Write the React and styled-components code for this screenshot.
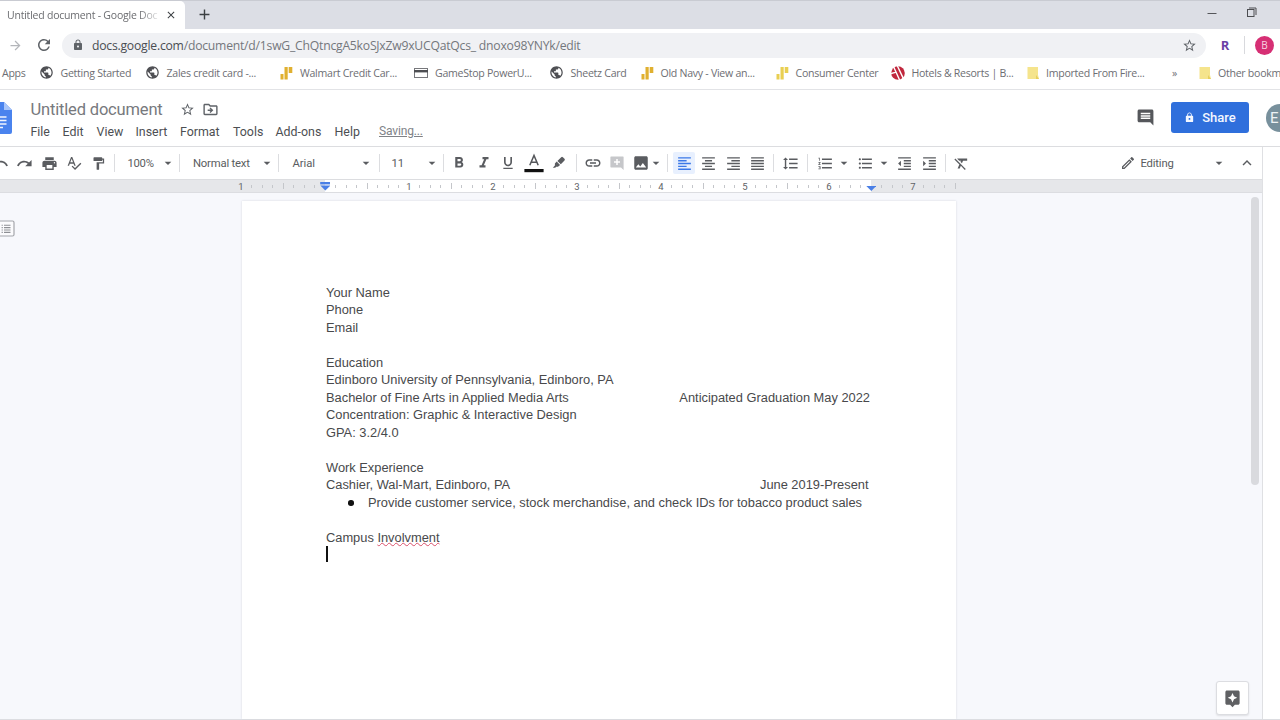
import React from 'react';
import styled, { createGlobalStyle, css } from 'styled-components';
import {
  MdUndo, MdRedo, MdPrint, MdSpellcheck, MdFormatPaint, MdArrowDropDown,
  MdFormatBold, MdFormatItalic, MdFormatUnderlined, MdLink, MdImage,
  MdFormatAlignLeft, MdFormatAlignCenter, MdFormatAlignRight, MdFormatAlignJustify,
  MdFormatLineSpacing, MdFormatListNumbered, MdFormatListBulleted,
  MdFormatIndentDecrease, MdFormatIndentIncrease, MdFormatClear,
  MdOutlineEdit, MdKeyboardArrowUp, MdStarBorder, MdComment, MdLock, MdPublic,
  MdRefresh, MdArrowForward, MdClose, MdAdd, MdAssistant, MdOutlineDriveFileMove,
} from 'react-icons/md';

const GlobalStyle = createGlobalStyle`
  * {
    box-sizing: border-box;
  }

  body {
    margin: 0;
    overflow: hidden;
    background: #fff;
  }

  svg {
    display: block;
    flex-shrink: 0;
  }
`;

const Window = styled.div`
  width: 1280px;
  height: 720px;
  display: flex;
  flex-direction: column;
  overflow: hidden;
  font-family: Roboto, 'Liberation Sans', sans-serif;
  color: #5f6368;
`;

/* Text whose tracking varies from place to place */
const Label = styled.span`
  white-space: nowrap;
  letter-spacing: ${({ $track }) => $track || 0}px;
`;

/* ---------- browser ---------- */

const TabStrip = styled.div`
  height: 29px;
  display: flex;
  align-items: stretch;
  background: #dcdee5;
  border-top: 1px solid #c9cbd2;
  font-family: 'Open Sans', 'Noto Sans', sans-serif;
`;

const Tab = styled.div`
  width: 185px;
  display: flex;
  align-items: center;
  padding: 0 8px 1px 7px;
  background: #fff;
  border-radius: 0 5px 0 0;
  font-size: 10.5px;
  color: #6b6c70;
`;

const TabTitle = styled.div`
  width: 152px;
  margin-right: 6px;
  overflow: hidden;
  white-space: nowrap;
  letter-spacing: -0.22px;
  mask-image: linear-gradient(to right, #000 132px, transparent 155px);
`;

const NewTab = styled.div`
  display: flex;
  align-items: center;
  padding: 0 0 1px 11px;
  color: #3c4043;
`;

const WindowButtons = styled.div`
  display: flex;
  align-items: center;
  gap: 29px;
  margin-left: auto;
  padding: 0 23px 5px 0;
`;

const AddressRow = styled.div`
  height: 32px;
  display: flex;
  align-items: center;
  color: #5f6368;
  font-family: 'Open Sans', 'Noto Sans', sans-serif;
`;

const NavButton = styled.div`
  width: ${({ $width }) => $width}px;
  display: flex;
  justify-content: center;
  color: ${({ $faded }) => ($faded ? '#b4b6ba' : '#5f6368')};
`;

const UrlBar = styled.div`
  width: 1144px;
  height: 25px;
  display: flex;
  align-items: center;
  padding: 0 9px 0 10px;
  border-radius: 13px;
  background: #f0f1f4;
`;

const Url = styled.div`
  flex: 1;
  margin-left: 8px;
  font-size: 12.2px;
  white-space: nowrap;
  letter-spacing: ${({ $track }) => $track}px;
  color: #74777c;

  b {
    font-weight: 400;
    color: #4a4d52;
  }
`;

const Extension = styled.div`
  width: 39px;
  display: flex;
  justify-content: center;
  color: #6a3fa5;
  font: 700 13px 'Open Sans', sans-serif;
  border-right: 1px solid #d8d9dd;
`;

const Profile = styled.div`
  width: 19px;
  height: 19px;
  margin-left: 10px;
  border-radius: 50%;
  display: flex;
  align-items: center;
  justify-content: center;
  flex-shrink: 0;
  background: #d62f74;
  color: #f7d3e2;
  font-size: 10px;
`;

const Bookmarks = styled.div`
  height: 29px;
  display: flex;
  align-items: center;
  padding: 0 0 5px;
  border-bottom: 1px solid #e2e3e6;
  font-family: 'Open Sans', 'Noto Sans', sans-serif;
  font-size: 10.6px;
  color: #6d6e73;
`;

const Bookmark = styled.div`
  width: ${({ $width }) => $width}px;
  flex-shrink: 0;
  display: flex;
  align-items: center;
  gap: 7px;
  padding-left: ${({ $pad }) => $pad || 0}px;
`;

/* ---------- docs header ---------- */

const DocsHeader = styled.header`
  height: 57px;
  display: flex;
  align-items: flex-start;
  border-bottom: 1px solid #dcdde0;
`;

const LogoBox = styled.div`
  width: 30.5px;
  padding-top: 12px;

  svg {
    margin-left: -12px;
  }
`;

const TitleColumn = styled.div`
  flex: 1;
  padding-top: 9px;
`;

const TitleRow = styled.div`
  height: 20px;
  display: flex;
  align-items: center;
`;

const Title = styled.h1`
  width: 149px;
  margin: 0;
  font-size: 16.5px;
  font-weight: 400;
  letter-spacing: ${({ $track }) => $track}px;
  white-space: nowrap;
  color: #77797d;
`;

const TitleIcon = styled.div`
  width: 22.5px;
`;

const Menu = styled.nav`
  height: 24px;
  display: flex;
  align-items: center;
  font-size: 12.4px;
  color: #4d4f53;
`;

const MenuItem = styled.div`
  width: ${({ $width }) => $width}px;
  white-space: nowrap;
`;

const SaveState = styled.div`
  font-size: 12px;
  letter-spacing: -0.15px;
  color: #808287;
  text-decoration: underline;
`;

const HeaderActions = styled.div`
  display: flex;
  align-items: center;
  padding-top: 12px;
  color: #55575b;
`;

const ShareButton = styled.button`
  width: 78px;
  height: 31px;
  margin: 0 17px 0 16px;
  padding: 0;
  display: flex;
  align-items: center;
  justify-content: center;
  gap: 7px;
  border: none;
  border-radius: 3px;
  background: #2f6fdc;
  color: #f3f7ff;
  font: 500 13px Roboto, sans-serif;
`;

const Account = styled.div`
  width: 14px;
  height: 28px;
  padding-left: 4px;
  overflow: hidden;
  border-radius: 14px 0 0 14px;
  background: #78909c;
  color: #eef2f4;
  font-size: 15px;
  line-height: 28px;
`;

/* ---------- toolbar ---------- */

const Main = styled.div`
  flex: 1;
  display: flex;
  min-height: 0;
  border-bottom: 1px solid #dcdde1;
`;

const Editor = styled.div`
  width: 1263px;
  display: flex;
  flex-direction: column;
  border-right: 1px solid #dfe0e3;
`;

const Toolbar = styled.div`
  height: 33px;
  display: flex;
  align-items: center;
  border-bottom: 1px solid #dcdde0;
  font-size: 11.3px;
  color: #5a5c60;
`;

const Slot = styled.div`
  width: ${({ $width }) => $width}px;
  height: 22px;
  flex-shrink: 0;
  display: flex;
  align-items: center;
  justify-content: center;
  margin-left: ${({ $shift }) => $shift || 0}px;

  ${({ $active }) => $active && css`
    background: #e8f0fe;
    color: #3b78e7;
    border-radius: 2px;
  `}
`;

const Divider = styled.div`
  width: ${({ $width }) => $width}px;
  flex-shrink: 0;
  display: flex;
  justify-content: center;

  &::after {
    content: '';
    width: 1px;
    height: 18px;
    background: #dcdde0;
  }
`;

const Field = styled.div`
  width: ${({ $width }) => $width}px;
  padding-left: ${({ $pad }) => $pad}px;
  flex-shrink: 0;
  white-space: nowrap;
  letter-spacing: ${({ $track }) => $track || 0}px;
`;

const ModeGroup = styled.div`
  display: flex;
  align-items: center;
  margin-left: auto;
`;

/* ---------- ruler ---------- */

const Ruler = styled.div`
  height: 13px;
  display: flex;
  padding-left: 235.75px;
  background: linear-gradient(to right, #e6e7ea 325px, #fff 325px, #fff 871px, #e6e7ea 871px);
  border-bottom: 1px solid #dcdde1;
`;

const Tick = styled.div`
  width: 10.5px;
  flex-shrink: 0;
  display: flex;
  align-items: center;
  justify-content: center;
  font-size: 9.5px;
  color: #606266;

  &::after {
    content: '';
    width: ${({ $size }) => ($size ? 1 : 0)}px;
    height: ${({ $size }) => $size}px;
    background: #c4c6ca;
  }
`;

/* ---------- page ---------- */

const Canvas = styled.div`
  flex: 1;
  min-height: 0;
  display: flex;
  background: #f7f8fc;
`;

const Gutter = styled.div`
  width: 242px;
  padding-top: 26.5px;
`;

const Page = styled.article`
  width: 714px;
  margin-top: 8px;
  padding: 82.6px 86px 0 84px;
  background: #fff;
  box-shadow: 0 0 2px #d5d7de;
  font-family: 'Liberation Sans', Arial, sans-serif;
  font-size: 12.85px;
  color: #48494b;
`;

const Line = styled.div`
  height: 17.5px;
  display: flex;
  justify-content: space-between;
  padding-right: ${({ $right }) => $right || 0}px;
  line-height: 17.5px;
  white-space: pre;
`;

const BulletLine = styled(Line)`
  justify-content: flex-start;
  align-items: center;
  gap: 14.5px;
  padding-left: 22px;
`;

const Dot = styled.span`
  width: 5.5px;
  height: 5.5px;
  margin-top: 1px;
  border-radius: 50%;
  background: #111;
`;

const Misspelled = styled.span`
  text-decoration: underline wavy #d9506a 1px;
  text-underline-offset: 0;
  text-decoration-skip-ink: none;
`;

const Caret = styled.span`
  width: 2px;
  height: 16px;
  background: #111;
`;

const RightSide = styled.div`
  flex: 1;
  display: flex;
  justify-content: flex-end;
  padding-top: 4px;
`;

const Explore = styled.button`
  width: 33px;
  height: 34px;
  margin: auto 2px 4px 0;
  padding: 0;
  display: flex;
  align-items: center;
  justify-content: center;
  border: 1px solid #dcdde1;
  border-radius: 3px;
  background: #fff;
  color: #5f6063;
  box-shadow: 0 1px 2px rgba(0, 0, 0, 0.1);
`;

const ScrollThumb = styled.div`
  width: 8px;
  height: 288px;
  margin-right: 3px;
  border-radius: 4px;
  background: #d9dade;
`;

const BarsIcon = ({ color = '#e0b030' }) => (
  <svg width="13" height="14" viewBox="0 0 13 14" fill={color}>
    <rect x="0.5" y="8" width="3" height="5.5" />
    <rect x="4.5" y="1" width="3.2" height="12.5" />
    <rect x="8.7" y="1" width="3.6" height="6" />
  </svg>
);

const CardIcon = () => (
  <svg width="14" height="12" viewBox="0 0 14 12">
    <rect x="0.5" y="1.5" width="13" height="9" fill="#fff" stroke="#77787c" />
    <rect x="0" y="3" width="14" height="2.4" fill="#4d4e52" />
  </svg>
);

const HotelIcon = () => (
  <svg width="14" height="14" viewBox="0 0 14 14">
    <circle cx="7" cy="7" r="6.8" fill="#c0273d" />
    <path d="M2.6 0.8 L8.6 14 M6.4 0 L12.4 12.6 M0 7.6 L4.4 6.4" stroke="#fff" strokeWidth="1.4" />
  </svg>
);

const FolderIcon = () => (
  <svg width="12" height="14" viewBox="0 0 12 14">
    <path d="M0.5 1 H11 V9 L12 13 H0.5 Z" fill="#f5e48c" />
    <path d="M9 9 L12 13 H9 Z" fill="#e8cf5c" />
  </svg>
);

const DocsLogo = () => (
  <svg width="24" height="32" viewBox="0 0 24 32">
    <path d="M2 0 H16 L24 8 V30 Q24 32 22 32 H2 Q0 32 0 30 V2 Q0 0 2 0 Z" fill="#4a83ee" />
    <path d="M16 0 L24 8 H16 Z" fill="#a9c6fa" />
    <path d="M6 15 H18.5 M6 18.5 H18.5 M6 22 H18.5 M6 25.5 H15" stroke="#f1f5fe" strokeWidth="1.7" />
  </svg>
);

const TextColorIcon = () => (
  <svg width="20" height="20" viewBox="0 0 20 20">
    <path d="M5.8 12.2 L10 2.4 L14.2 12.2 M7.2 9.2 H12.8" fill="none" stroke="#55575b" strokeWidth="1.5" />
    <rect x="0.4" y="16" width="19.2" height="3.2" fill="#111" />
  </svg>
);

const MarkerIcon = () => (
  <svg width="14" height="14" viewBox="0 0 14 14" fill="#5a5c60">
    <path d="M9.2 1.2 Q10 0.4 10.9 1.2 L12.5 2.8 Q13.3 3.6 12.5 4.5 L8.8 8.3 L5.4 4.9 Z" />
    <path d="M4.7 5.6 L8.1 9 L6 10.7 H4.2 L3.2 11.8 H0.8 L2.9 9.5 V7.6 Z" />
  </svg>
);

const AddCommentIcon = () => (
  <svg width="14" height="14" viewBox="0 0 14 14">
    <path d="M1 0.5 H13 Q13.6 0.5 13.6 1.1 V14 L11 11.4 H1 Q0.4 11.4 0.4 10.8 V1.1 Q0.4 0.5 1 0.5 Z" fill="#c6c7ca" />
    <path d="M7 3 V9 M4 6 H10" stroke="#fff" strokeWidth="1.5" />
  </svg>
);

const OutlineIcon = () => (
  <svg width="15" height="17" viewBox="0 0 15 17">
    <rect x="-3" y="1" width="17" height="15" rx="1.5" fill="#fbfbfd" stroke="#a4a6ab" strokeWidth="1.2" />
    <path d="M4 5.2 H10.5 M4 7.6 H10.5 M4 10 H10.5 M4 12.4 H10.5" stroke="#8d8f94" strokeWidth="1.1" />
    <path d="M1.6 5.2 H2.8 M1.6 7.6 H2.8 M1.6 10 H2.8 M1.6 12.4 H2.8" stroke="#8d8f94" strokeWidth="1.1" />
  </svg>
);

const IndentMarker = ({ both }) => (
  <svg width="10.5" height="12" viewBox="0 0 10.5 12" fill="#4a7fe6">
    {both && <rect x="0.2" y="2" width="10.2" height="2.4" />}
    {both
      ? <path d="M0.3 5.6 H10.3 L5.3 10.6 Z" />
      : <path d="M0.3 6 H10.3 L5.3 11 Z" />}
  </svg>
);

const Globe = () => <MdPublic size={15} color="#4f5054" />;

const bookmarks = [
  { text: 'Apps', width: 38.5, pad: 2 },
  { text: 'Getting Started', width: 106, icon: <Globe /> },
  { text: 'Zales credit card -...', width: 135.5, icon: <Globe /> },
  { text: 'Walmart Credit Car...', width: 134, icon: <BarsIcon /> },
  { text: 'GameStop PowerU...', width: 134.5, icon: <CardIcon /> },
  { text: 'Sheetz Card', width: 92, icon: <Globe /> },
  { text: 'Old Navy - View an...', width: 135, icon: <BarsIcon /> },
  { text: 'Consumer Center', width: 115, icon: <BarsIcon color="#e9cf52" /> },
  { text: 'Hotels & Resorts | B...', width: 136.5, icon: <HotelIcon /> },
  { text: 'Imported From Fire...', width: 145, icon: <FolderIcon /> },
  { text: '»', width: 27 },
  { text: 'Other bookmarks', width: 100, icon: <FolderIcon /> },
];

const menus = [
  ['File', 32], ['Edit', 34], ['View', 39], ['Insert', 44.5], ['Format', 53],
  ['Tools', 42.5], ['Add-ons', 59], ['Help', 44.5],
];

const Arrow = ({ width = 14 }) => (
  <Slot $width={width}><MdArrowDropDown size={16} /></Slot>
);

const ticks = Array.from({ length: 69 }, (_, i) => i);

function RulerTick({ index }) {
  if (index === 8) return <Tick><IndentMarker both /></Tick>;
  if (index === 60) return <Tick><IndentMarker /></Tick>;
  if (index % 8 === 0) return <Tick>{Math.abs(index / 8 - 1)}</Tick>;
  return <Tick $size={index % 4 === 0 ? 6 : 3} />;
}

function Browser() {
  return (
    <>
      <TabStrip>
        <Tab>
          <TabTitle>Untitled document - Google Doc</TabTitle>
          <MdClose size={12} color="#3c4043" />
        </Tab>
        <NewTab><MdAdd size={17} /></NewTab>
        <WindowButtons>
          <svg width="10" height="10" viewBox="0 0 10 10"><path d="M0.5 5.5 H9.5" stroke="#55565a" /></svg>
          <svg width="11" height="11" viewBox="0 0 11 11" fill="none" stroke="#4c4d51">
            <rect x="1.5" y="2.5" width="6.5" height="7" />
            <path d="M3 1 H10 V8" />
          </svg>
        </WindowButtons>
      </TabStrip>
      <AddressRow>
        <NavButton $width={31} $faded><MdArrowForward size={15} /></NavButton>
        <NavButton $width={25}><MdRefresh size={18} /></NavButton>
        <NavButton $width={6} />
        <UrlBar>
          <MdLock size={12} />
          <Url $track={-0.23}><b>docs.google.com</b>/document/d/1swG_ChQtncgA5koSJxZw9xUCQatQcs_ dnoxo98YNYk/edit</Url>
          <MdStarBorder size={15} />
        </UrlBar>
        <Extension>R</Extension>
        <Profile>B</Profile>
      </AddressRow>
      <Bookmarks>
        {bookmarks.map(({ text, width, pad, icon }) => (
          <Bookmark key={text} $width={width} $pad={pad}>
            {icon}
            <Label $track={-0.28}>{text}</Label>
          </Bookmark>
        ))}
      </Bookmarks>
    </>
  );
}

function Header() {
  return (
    <DocsHeader>
      <LogoBox><DocsLogo /></LogoBox>
      <TitleColumn>
        <TitleRow>
          <Title $track={-0.17}>Untitled document</Title>
          <TitleIcon><MdStarBorder size={15} /></TitleIcon>
          <TitleIcon><MdOutlineDriveFileMove size={17} /></TitleIcon>
        </TitleRow>
        <Menu>
          {menus.map(([name, width]) => (
            <MenuItem key={name} $width={width}>{name}</MenuItem>
          ))}
          <SaveState>Saving...</SaveState>
        </Menu>
      </TitleColumn>
      <HeaderActions>
        <MdComment size={19} />
        <ShareButton><MdLock size={11} />Share</ShareButton>
        <Account>E</Account>
      </HeaderActions>
    </DocsHeader>
  );
}

function Tools() {
  return (
    <Toolbar>
      <Slot $width={24} $shift={-12}><MdUndo size={17} /></Slot>
      <Slot $width={24}><MdRedo size={17} /></Slot>
      <Slot $width={26}><MdPrint size={17} /></Slot>
      <Slot $width={24}><MdSpellcheck size={16} /></Slot>
      <Slot $width={24}><MdFormatPaint size={15} /></Slot>
      <Divider $width={8} />
      <Field $width={43} $pad={9.5} $track={-0.3}>100%</Field>
      <Arrow />
      <Divider $width={8} />
      <Field $width={77} $pad={10} $track={-0.2}>Normal text</Field>
      <Arrow />
      <Divider $width={8} />
      <Field $width={77} $pad={10.5} $track={-0.1}>Arial</Field>
      <Arrow />
      <Divider $width={12} />
      <Field $width={40} $pad={6.5}>11</Field>
      <Arrow />
      <Divider $width={9} />
      <Slot $width={21}><MdFormatBold size={18} /></Slot>
      <Slot $width={29}><MdFormatItalic size={18} /></Slot>
      <Slot $width={20}><MdFormatUnderlined size={16} /></Slot>
      <Slot $width={31}><TextColorIcon /></Slot>
      <Slot $width={20}><MarkerIcon /></Slot>
      <Divider $width={15} />
      <Slot $width={18}><MdLink size={18} /></Slot>
      <Slot $width={30}><AddCommentIcon /></Slot>
      <Slot $width={18}><MdImage size={18} /></Slot>
      <Arrow width={12} />
      <Divider $width={11} />
      <Slot $width={22} $active><MdFormatAlignLeft size={17} /></Slot>
      <Slot $width={26}><MdFormatAlignCenter size={17} /></Slot>
      <Slot $width={24}><MdFormatAlignRight size={17} /></Slot>
      <Slot $width={25}><MdFormatAlignJustify size={17} /></Slot>
      <Divider $width={7} />
      <Slot $width={26}><MdFormatLineSpacing size={17} /></Slot>
      <Divider $width={9} />
      <Slot $width={26}><MdFormatListNumbered size={17} /></Slot>
      <Arrow width={12} />
      <Slot $width={30}><MdFormatListBulleted size={17} /></Slot>
      <Arrow width={8} />
      <Slot $width={33}><MdFormatIndentDecrease size={17} /></Slot>
      <Slot $width={16}><MdFormatIndentIncrease size={17} /></Slot>
      <Divider $width={16} />
      <Slot $width={16}><MdFormatClear size={17} /></Slot>
      <ModeGroup>
        <Slot $width={16}><MdOutlineEdit size={16} /></Slot>
        <Field $width={70} $pad={4.5} $track={-0.2}>Editing</Field>
        <Arrow width={26} />
        <Slot $width={30}><MdKeyboardArrowUp size={18} /></Slot>
      </ModeGroup>
    </Toolbar>
  );
}

function Resume() {
  return (
    <Page>
      <Line>Your Name</Line>
      <Line>Phone</Line>
      <Line>Email</Line>
      <Line />
      <Line>Education</Line>
      <Line>Edinboro University of Pennsylvania, Edinboro, PA</Line>
      <Line>
        <Label>Bachelor of Fine Arts in Applied Media Arts</Label>
        <Label>Anticipated Graduation May 2022</Label>
      </Line>
      <Line>Concentration: Graphic &amp; Interactive Design</Line>
      <Line>GPA: 3.2/4.0</Line>
      <Line />
      <Line>Work Experience</Line>
      <Line $right={1.5}>
        <Label>Cashier, Wal-Mart, Edinboro, PA</Label>
        <Label>June 2019-Present</Label>
      </Line>
      <BulletLine>
        <Dot />
        <Label>Provide customer service, stock merchandise, and check IDs for tobacco product sales</Label>
      </BulletLine>
      <Line />
      <Line>
        <Label>Campus <Misspelled>Involvment</Misspelled></Label>
      </Line>
      <Line><Caret /></Line>
    </Page>
  );
}

export default function App() {
  return (
    <Window>
      <GlobalStyle />
      <Browser />
      <Header />
      <Main>
        <Editor>
          <Tools />
          <Ruler>
            {ticks.map((i) => <RulerTick key={i} index={i} />)}
          </Ruler>
          <Canvas>
            <Gutter><OutlineIcon /></Gutter>
            <Resume />
            <RightSide>
              <Explore><MdAssistant size={19} /></Explore>
              <ScrollThumb />
            </RightSide>
          </Canvas>
        </Editor>
      </Main>
    </Window>
  );
}
